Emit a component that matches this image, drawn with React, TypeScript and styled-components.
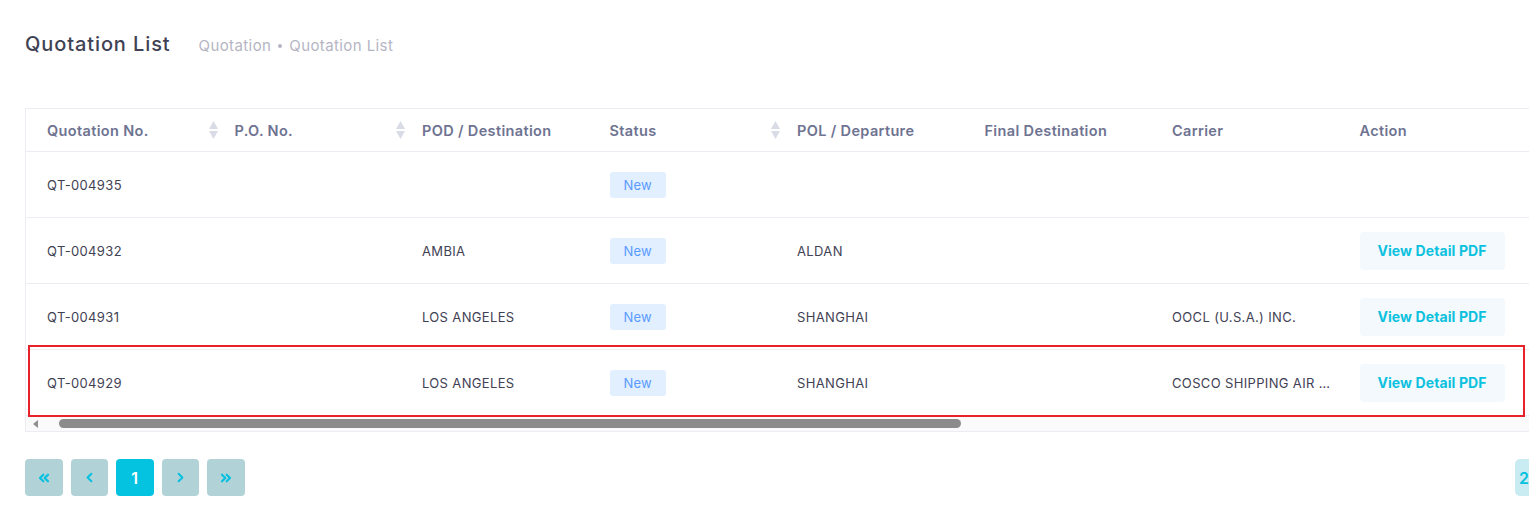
import React from "react";
import styled, { createGlobalStyle } from "styled-components";
import { ChevronsLeft, ChevronLeft, ChevronRight, ChevronsRight } from "lucide-react";

const Global = createGlobalStyle`
  html, body { margin: 0; padding: 0; background: #ffffff; }
  body { font-family: Inter, "Noto Sans", "Liberation Sans", sans-serif; overflow: hidden; width: 1529px; height: 515px; }
  * { box-sizing: border-box; }
`;

const Page = styled.div`
  padding: 32px 0 0 25px;
  width: 1600px;
`;

const TitleBar = styled.div`
  display: flex;
  align-items: baseline;
  gap: 28px;
  height: 30px;
`;

const Title = styled.h1`
  margin: 0;
  font-size: 20px;
  font-weight: 500;
  color: #3f4254;
  letter-spacing: 0.9px;
`;

const Crumbs = styled.div`
  display: flex;
  align-items: center;
  gap: 7px;
  font-size: 15px;
  letter-spacing: 0.4px;
  color: #b5b5c3;
`;

const Dot = styled.span`
  width: 4px;
  height: 4px;
  border-radius: 50%;
  background: #b5b5c3;
`;

const Card = styled.div`
  margin-top: 46px;
  width: 1560px;
  border: 1px solid #ebedf3;
  border-right: none;
`;

const Row = styled.div<{ $header?: boolean }>`
  position: relative;
  display: grid;
  grid-template-columns: repeat(8, 187.5px) 1fr;
  align-items: center;
  height: ${(p) => (p.$header ? "43px" : "66px")};
  border-bottom: 1px solid #ebedf3;
  background: #fff;
`;

const HeadCell = styled.div`
  display: flex;
  align-items: center;
  justify-content: space-between;
  padding: 0 0 0 21px;
  font-size: 14.5px;
  font-weight: 600;
  letter-spacing: 0.35px;
  color: #6e7391;
  white-space: nowrap;
`;

const SortWrap = styled.span`
  display: flex;
  margin-right: -5px;
`;

const Cell = styled.div<{ $clip?: boolean }>`
  padding: 0 ${(p) => (p.$clip ? "8px" : "12px")} 0 21px;
  font-size: 13px;
  letter-spacing: 0.35px;
  color: #3f4254;
  white-space: nowrap;
  overflow: hidden;
  text-overflow: ellipsis;
`;

const Badge = styled.span`
  display: inline-block;
  padding: 5px 14px;
  border-radius: 3px;
  background: #e1efff;
  color: #5b9bff;
  font-size: 13px;
  letter-spacing: 0.2px;
`;

const PdfButton = styled.button`
  border: none;
  background: #f3f9fc;
  color: #0cc1df;
  font-family: inherit;
  font-size: 14px;
  font-weight: 700;
  letter-spacing: 0.1px;
  height: 38px;
  width: 145px;
  border-radius: 4px;
  cursor: pointer;
`;

const Highlight = styled.div`
  position: absolute;
  left: 2px;
  top: -5px;
  width: 1497px;
  height: 72px;
  border: 2px solid #e8212b;
  pointer-events: none;
`;

const ScrollTrack = styled.div`
  display: flex;
  align-items: center;
  height: 15px;
  padding-left: 7px;
  background: #fafafa;
`;

const Arrow = styled.div`
  width: 0;
  height: 0;
  border-top: 4px solid transparent;
  border-bottom: 4px solid transparent;
  border-right: 5px solid #8f8f8f;
`;

const Thumb = styled.div`
  margin-left: 21px;
  width: 902px;
  height: 9px;
  border-radius: 5px;
  background: #8b8b8b;
`;

const Footer = styled.div`
  margin-top: 27px;
  width: 1560px;
  display: flex;
  align-items: center;
`;

const Pager = styled.div`
  display: flex;
  gap: 8px;
`;

const PageBtn = styled.button<{ $active?: boolean }>`
  width: 37.5px;
  height: 37px;
  border: none;
  border-radius: 4px;
  display: flex;
  align-items: center;
  justify-content: center;
  background: ${(p) => (p.$active ? "#04c3e0" : "#b1d3d7")};
  color: ${(p) => (p.$active ? "#ffffff" : "#04c0e0")};
  font-family: inherit;
  font-size: 16px;
  font-weight: 600;
  padding: 0;
`;

const SizeSelect = styled.div`
  margin-left: auto;
  width: 70px;
  height: 37px;
  border-radius: 5px;
  background: #c8ecf2;
  color: #04c0e0;
  font-size: 16px;
  font-weight: 600;
  display: flex;
  align-items: center;
  padding-left: 4px;
`;

const SortIcon = () => (
  <SortWrap>
    <svg width="11" height="20" viewBox="0 0 11 20">
      <path d="M5.5 1 L10 9 L1 9 Z" fill="#d9dce6" />
      <path d="M5.5 19 L10 11 L1 11 Z" fill="#d9dce6" />
    </svg>
  </SortWrap>
);

const headers: { label: string; sort?: boolean }[] = [
  { label: "Quotation No.", sort: true },
  { label: "P.O. No.", sort: true },
  { label: "POD / Destination" },
  { label: "Status", sort: true },
  { label: "POL / Departure" },
  { label: "Final Destination" },
  { label: "Carrier" },
  { label: "Action" },
];

const rows = [
  { no: "QT-004935", pod: "", pol: "", carrier: "", pdf: false },
  { no: "QT-004932", pod: "AMBIA", pol: "ALDAN", carrier: "", pdf: true },
  { no: "QT-004931", pod: "LOS ANGELES", pol: "SHANGHAI", carrier: "OOCL (U.S.A.) INC.", pdf: true },
  { no: "QT-004929", pod: "LOS ANGELES", pol: "SHANGHAI", carrier: "COSCO SHIPPING AIR FREIGHT", pdf: true, hl: true },
];

export default function App() {
  return (
    <>
      <Global />
      <Page>
        <TitleBar>
          <Title>Quotation List</Title>
          <Crumbs>
            <span>Quotation</span>
            <Dot />
            <span>Quotation List</span>
          </Crumbs>
        </TitleBar>
        <Card>
          <Row $header>
            {headers.map((h) => (
              <HeadCell key={h.label}>
                <span>{h.label}</span>
                {h.sort && <SortIcon />}
              </HeadCell>
            ))}
            <HeadCell />
          </Row>
          {rows.map((r) => (
            <Row key={r.no}>
              <Cell>{r.no}</Cell>
              <Cell />
              <Cell>{r.pod}</Cell>
              <Cell>
                <Badge>New</Badge>
              </Cell>
              <Cell>{r.pol}</Cell>
              <Cell />
              <Cell $clip>{r.carrier}</Cell>
              <Cell>{r.pdf && <PdfButton>View Detail PDF</PdfButton>}</Cell>
              <Cell />
              {r.hl && <Highlight />}
            </Row>
          ))}
          <ScrollTrack>
            <Arrow />
            <Thumb />
          </ScrollTrack>
        </Card>
        <Footer>
          <Pager>
            <PageBtn><ChevronsLeft size={16} strokeWidth={3.2} /></PageBtn>
            <PageBtn><ChevronLeft size={15} strokeWidth={3.2} /></PageBtn>
            <PageBtn $active>1</PageBtn>
            <PageBtn><ChevronRight size={15} strokeWidth={3.2} /></PageBtn>
            <PageBtn><ChevronsRight size={16} strokeWidth={3.2} /></PageBtn>
          </Pager>
          <SizeSelect>20</SizeSelect>
        </Footer>
      </Page>
    </>
  );
}
